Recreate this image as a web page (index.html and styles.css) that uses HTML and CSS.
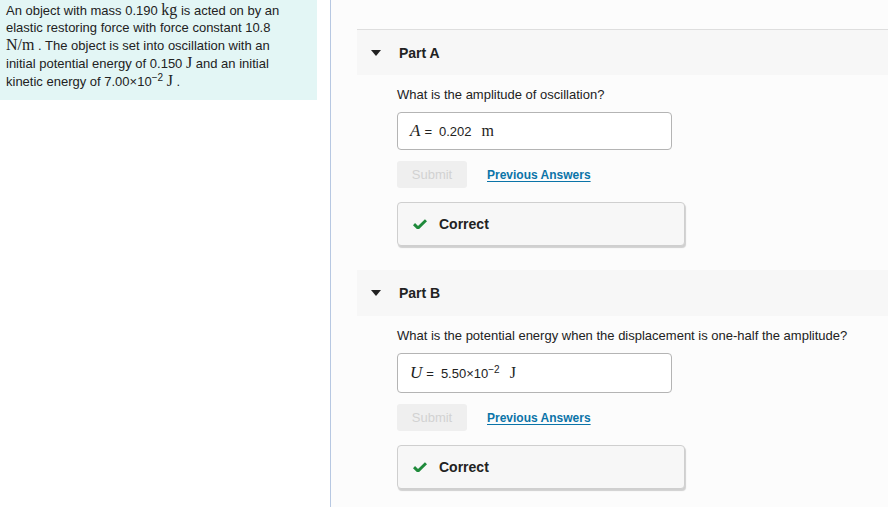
FILE: index.html
```html
<!DOCTYPE html>
<html>
<head>
<meta charset="utf-8">
<link rel="stylesheet" href="styles.css">
</head>
<body>
<div class="page">
  <div class="left">
    <div class="problem">
      An object with mass 0.190 <span class="m">kg</span> is acted on by an elastic restoring force with force constant 10.8 <span class="m">N/m</span> . The object is set into oscillation with an initial potential energy of 0.150 <span class="m">J</span> and an initial kinetic energy of 7.00×10<sup>−2</sup> <span class="m">J</span> .
    </div>
  </div>
  <div class="right">
    <section class="part">
      <div class="part-head first">
        <span class="tri"></span>
        <span class="part-title">Part A</span>
      </div>
      <div class="part-body">
        <p class="question">What is the amplitude of oscillation?</p>
        <div class="answer">
          <span class="var">A</span><span class="eq">=</span><span class="num">0.202</span><span class="unit">m</span>
        </div>
        <div class="actions">
          <button class="submit">Submit</button>
          <a class="prev">Previous Answers</a>
        </div>
        <div class="result">
          <svg class="check" viewBox="0 0 14 10" width="14" height="10"><path d="M1 5.2 L5 9 L13 1.2" fill="none" stroke="#1f8a3b" stroke-width="3"/></svg>
          <span>Correct</span>
        </div>
      </div>
    </section>
    <section class="part">
      <div class="part-head">
        <span class="tri"></span>
        <span class="part-title">Part B</span>
      </div>
      <div class="part-body">
        <p class="question">What is the potential energy when the displacement is one-half the amplitude?</p>
        <div class="answer tall">
          <span class="var">U</span><span class="eq">=</span><span class="num">5.50×10<sup>−2</sup></span><span class="unit">J</span>
        </div>
        <div class="actions">
          <button class="submit">Submit</button>
          <a class="prev">Previous Answers</a>
        </div>
        <div class="result">
          <svg class="check" viewBox="0 0 14 10" width="14" height="10"><path d="M1 5.2 L5 9 L13 1.2" fill="none" stroke="#1f8a3b" stroke-width="3"/></svg>
          <span>Correct</span>
        </div>
      </div>
    </section>
  </div>
</div>
</body>
</html>
```

FILE: styles.css
```css
html, body {
  margin: 0;
  padding: 0;
  background: #fff;
}
body {
  font-family: "Liberation Sans", Arial, sans-serif;
  color: #222;
}
.page {
  display: flex;
  height: 507px;
}
.left {
  width: 330px;
  flex: none;
}
.problem {
  width: 317px;
  height: 100px;
  box-sizing: border-box;
  padding: 1px 27px 0 6px;
  background: #e3f6f5;
  font-size: 13px;
  line-height: 17px;
}
.problem sup, .answer sup {
  font-size: 10px;
  line-height: 0;
  vertical-align: 5px;
}
.m {
  font-family: "Liberation Serif", "Times New Roman", serif;
  font-size: 16px;
}
.right {
  flex: 1;
  border-left: 1px solid #b7c8e2;
  background: #fcfcfc;
  padding: 29px 0 0 26px;
}
.part-head {
  height: 46px;
  box-sizing: border-box;
  background: #f7f7f7;
  display: flex;
  align-items: center;
}
.part-head.first {
  border-top: 1px solid #dedede;
}
.tri {
  width: 0;
  height: 0;
  border-left: 5px solid transparent;
  border-right: 5px solid transparent;
  border-top: 6px solid #222;
  margin-left: 14px;
  margin-right: 18px;
}
.part-title {
  font-weight: bold;
  font-size: 14px;
  color: #222;
}
.part-body {
  padding: 0 0 24px 40px;
}
.question {
  margin: 0;
  padding-top: 12px;
  font-size: 13px;
  line-height: 15px;
  height: 25px;
  color: #222;
}
.answer {
  width: 275px;
  height: 38px;
  box-sizing: border-box;
  border: 1px solid #b4b4b4;
  border-radius: 4px;
  background: #fff;
  display: flex;
  align-items: center;
  padding-left: 12px;
}
.answer.tall {
  height: 40px;
}
.var {
  font-family: "Liberation Serif", "Times New Roman", serif;
  font-style: italic;
  font-size: 17px;
  color: #222;
}
.eq {
  font-size: 13px;
  margin: 0 7px 0 4px;
}
.num {
  font-size: 13px;
  color: #222;
}
.unit {
  font-family: "Liberation Serif", "Times New Roman", serif;
  font-size: 16px;
  margin-left: 10px;
}
.actions {
  display: flex;
  align-items: center;
  margin-top: 11px;
  height: 27px;
}
.submit {
  width: 70px;
  height: 27px;
  border: none;
  border-radius: 3px;
  background: #efefef;
  color: #d2d2d2;
  font-family: "Liberation Sans", Arial, sans-serif;
  font-size: 13px;
  padding: 0;
}
.prev {
  margin-left: 20px;
  font-weight: bold;
  font-size: 12px;
  color: #0b74a8;
  text-decoration: underline;
  text-underline-offset: 2px;
}
.result {
  margin-top: 14px;
  width: 288px;
  height: 44px;
  box-sizing: border-box;
  background: #f7f7f7;
  border: 1px solid #cfcfcf;
  border-radius: 4px;
  box-shadow: 1px 2px 1px #d0d0d0;
  display: flex;
  align-items: center;
  padding-left: 15px;
  font-weight: bold;
  font-size: 14px;
  color: #222;
}
.check {
  margin-right: 12px;
}
```
